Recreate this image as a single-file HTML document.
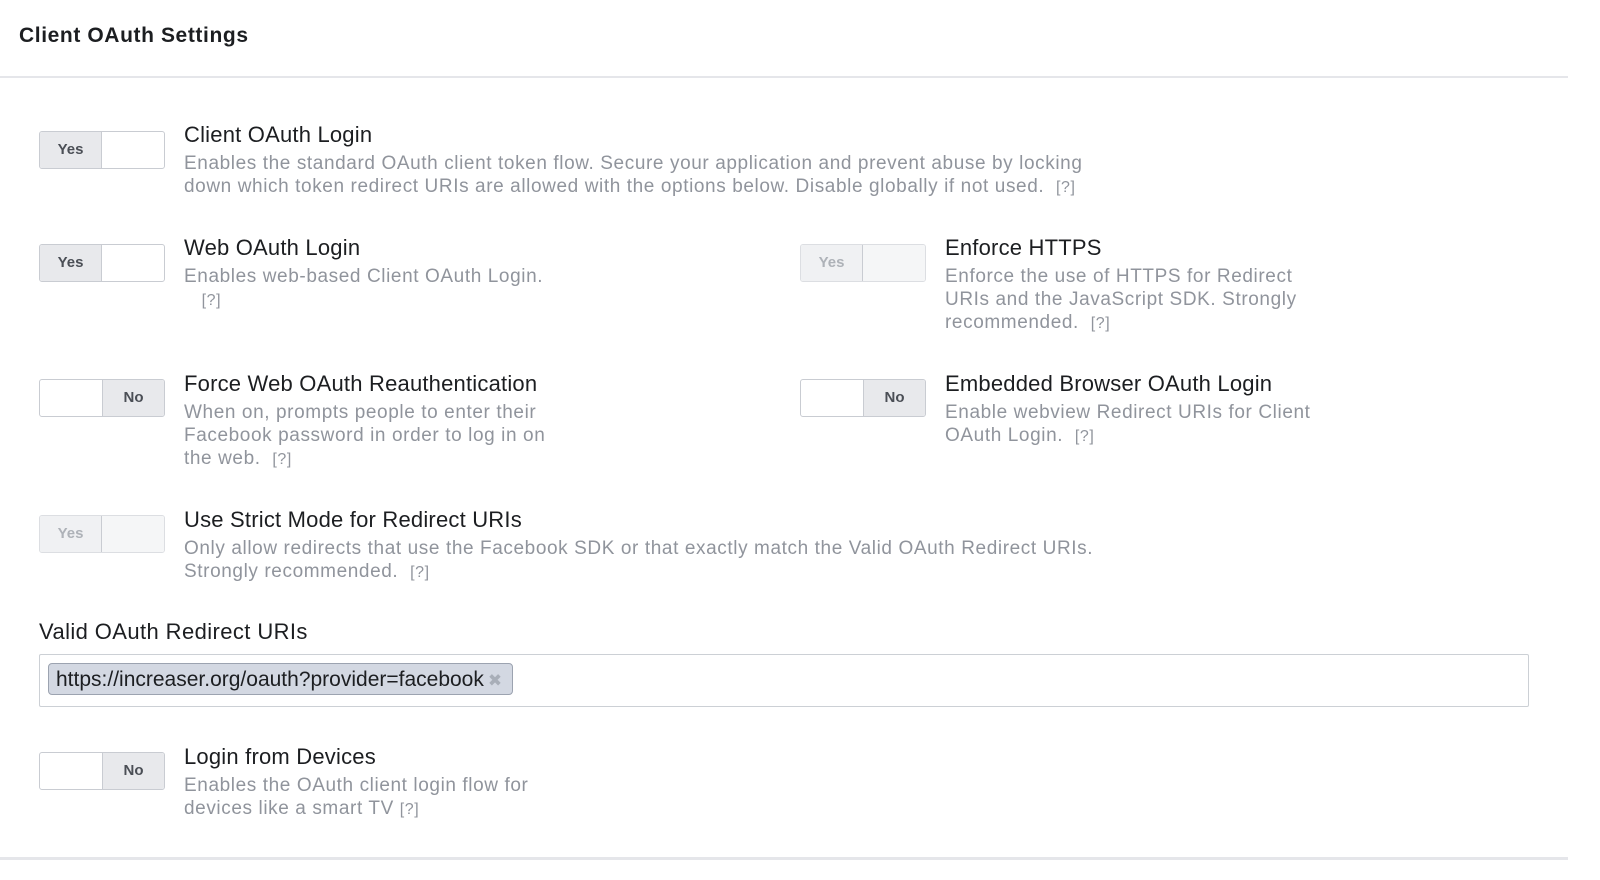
<!DOCTYPE html>
<html><head><style>
body{margin:0;width:1600px;height:880px;background:#fff;font-family:"Liberation Sans",sans-serif;position:relative;overflow:hidden}
.hdr{position:absolute;left:19px;top:24px;font-size:21px;font-weight:bold;color:#1c1e21;letter-spacing:0.6px}
.line{position:absolute;left:0;width:1568px;height:2px;background:#e5e6ea}
.tg{position:absolute;width:124px;height:36px;border:1px solid #c9ccd2;border-radius:3px;display:flex;overflow:hidden;background:#fff}
.tg div{width:62px;height:36px;box-sizing:border-box}
.g{background:#e8e9ec;font-size:15px;font-weight:bold;color:#4b4f56;text-align:center;line-height:36px}
.g.l{border-right:1px solid #c9ccd2}
.g.r{border-left:1px solid #c9ccd2}
.tg.dis{border-color:#dcdee2}
.tg.dis .g{background:#f0f1f3;color:#aeb2b8}
.tg.dis .w{background:#f5f6f7}
.t{position:absolute;font-size:22px;color:#1c1e21;white-space:nowrap;letter-spacing:0.2px}
.d{position:absolute;font-size:19px;color:#90949c;line-height:23px;white-space:nowrap;letter-spacing:0.6px}
.q{color:#90949c;font-size:16px}
.lab{position:absolute;left:39px;top:619px;font-size:22px;color:#1c1e21;letter-spacing:0.4px}
.inp{position:absolute;left:39px;top:654px;width:1488px;height:51px;border:1px solid #ccd0d5;border-radius:2px}
.tok{position:absolute;left:8px;top:8px;height:32px;background:#d3d8e2;border:1px solid #9ca3b0;border-radius:4px;font-size:21px;color:#1c1e21;line-height:32px;padding-left:7px;box-sizing:border-box;width:465px;white-space:nowrap}
.tok span{color:#a8aeb8;font-size:17px;margin-left:4px}
</style></head><body>
<div class="hdr">Client OAuth Settings</div>
<div class="line" style="top:76px"></div>

<div class="tg" style="left:39px;top:131px"><div class="g l">Yes</div><div class="w"></div></div>
<div class="t" style="left:184px;top:122px">Client OAuth Login</div>
<div class="d" style="left:184px;top:152px">Enables the standard OAuth client token flow. Secure your application and prevent abuse by locking<br>down which token redirect URIs are allowed with the options below. Disable globally if not used. &nbsp;<span class="q">[?]</span></div>

<div class="tg" style="left:39px;top:244px"><div class="g l">Yes</div><div class="w"></div></div>
<div class="t" style="left:184px;top:235px">Web OAuth Login</div>
<div class="d" style="left:184px;top:265px">Enables web-based Client OAuth Login.<br>&nbsp;&nbsp;&nbsp;<span class="q">[?]</span></div>

<div class="tg dis" style="left:800px;top:244px"><div class="g l">Yes</div><div class="w"></div></div>
<div class="t" style="left:945px;top:235px">Enforce HTTPS</div>
<div class="d" style="left:945px;top:265px">Enforce the use of HTTPS for Redirect<br>URIs and the JavaScript SDK. Strongly<br>recommended. &nbsp;<span class="q">[?]</span></div>

<div class="tg" style="left:39px;top:379px"><div class="w"></div><div class="g r">No</div></div>
<div class="t" style="left:184px;top:371px">Force Web OAuth Reauthentication</div>
<div class="d" style="left:184px;top:401px">When on, prompts people to enter their<br>Facebook password in order to log in on<br>the web. &nbsp;<span class="q">[?]</span></div>

<div class="tg" style="left:800px;top:379px"><div class="w"></div><div class="g r">No</div></div>
<div class="t" style="left:945px;top:371px">Embedded Browser OAuth Login</div>
<div class="d" style="left:945px;top:401px">Enable webview Redirect URIs for Client<br>OAuth Login. &nbsp;<span class="q">[?]</span></div>

<div class="tg dis" style="left:39px;top:515px"><div class="g l">Yes</div><div class="w"></div></div>
<div class="t" style="left:184px;top:507px">Use Strict Mode for Redirect URIs</div>
<div class="d" style="left:184px;top:537px">Only allow redirects that use the Facebook SDK or that exactly match the Valid OAuth Redirect URIs.<br>Strongly recommended. &nbsp;<span class="q">[?]</span></div>

<div class="lab">Valid OAuth Redirect URIs</div>
<div class="inp"><div class="tok">https://increaser.org/oauth?provider=facebook<span>✖</span></div></div>

<div class="tg" style="left:39px;top:752px"><div class="w"></div><div class="g r">No</div></div>
<div class="t" style="left:184px;top:744px">Login from Devices</div>
<div class="d" style="left:184px;top:774px">Enables the OAuth client login flow for<br>devices like a smart TV <span class="q">[?]</span></div>

<div class="line" style="top:857px;height:3px"></div>
</body></html>
